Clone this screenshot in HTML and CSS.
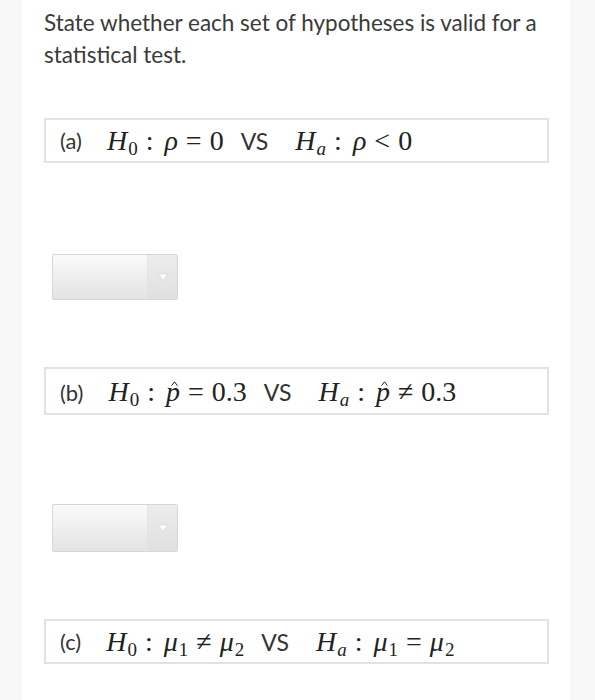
FILE: index.html
```html
<!DOCTYPE html>
<html>
<head>
<meta charset="utf-8">
<link rel="stylesheet" href="styles.css">
</head>
<body>
<div class="card">
  <p class="title">State whether each set of hypotheses is valid for a statistical test.</p>

  <div class="hyp">
    <span class="lbl">(a)</span>
    <span class="math"><i>H</i><sub>0</sub><span class="col">:</span><i>ρ</i><span class="op">=</span>0</span>
    <span class="vs">VS</span>
    <span class="math"><i>H</i><sub><i>a</i></sub><span class="col">:</span><i>ρ</i><span class="op">&lt;</span>0</span>
  </div>
  <div class="select"><span class="sel-main"></span><span class="sel-btn"><svg width="10" height="8" viewBox="0 0 10 8"><path d="M0.5 1 L9.5 1 L5 7.5 Z" fill="#fff" stroke="#d0d0d0" stroke-width="0.6"/></svg></span></div>

  <div class="hyp tall">
    <span class="lbl">(b)</span>
    <span class="math"><i>H</i><sub>0</sub><span class="col">:</span><span class="hat"><i>p</i><svg class="caret" width="7" height="5" viewBox="0 0 7 5"><path d="M0.6 4.6 L3.5 0.8 L6.4 4.6" fill="none" stroke="#222" stroke-width="1"/></svg></span><span class="op">=</span>0.3</span>
    <span class="vs">VS</span>
    <span class="math"><i>H</i><sub><i>a</i></sub><span class="col">:</span><span class="hat"><i>p</i><svg class="caret" width="7" height="5" viewBox="0 0 7 5"><path d="M0.6 4.6 L3.5 0.8 L6.4 4.6" fill="none" stroke="#222" stroke-width="1"/></svg></span><span class="op">≠</span>0.3</span>
  </div>
  <div class="select"><span class="sel-main"></span><span class="sel-btn"><svg width="10" height="8" viewBox="0 0 10 8"><path d="M0.5 1 L9.5 1 L5 7.5 Z" fill="#fff" stroke="#d0d0d0" stroke-width="0.6"/></svg></span></div>

  <div class="hyp">
    <span class="lbl">(c)</span>
    <span class="math"><i>H</i><sub>0</sub><span class="col">:</span><i>μ</i><sub>1</sub><span class="op">≠</span><i>μ</i><sub>2</sub></span>
    <span class="vs">VS</span>
    <span class="math"><i>H</i><sub><i>a</i></sub><span class="col">:</span><i>μ</i><sub>1</sub><span class="op">=</span><i>μ</i><sub>2</sub></span>
  </div>
</div>
</body>
</html>
```
FILE: styles.css
```css
html, body {
  margin: 0;
  padding: 0;
  background: #f8f8f8;
}
.card {
  margin-left: 22px;
  width: 548px;
  min-height: 700px;
  background: #fff;
  padding: 7px 21px 0 22px;
  box-sizing: border-box;
  font-family: Lato, "Open Sans", sans-serif;
  color: #333;
}
.title {
  margin: 0;
  font-size: 22.5px;
  line-height: 32px;
  color: #3a3a3a;
}
.hyp {
  height: 45px;
  border: 2px solid #e2e2e2;
  box-sizing: border-box;
  display: flex;
  align-items: center;
  padding-left: 14px;
  width: 505px;
}
.hyp.tall { height: 48px; padding-top: 2px; }
.title + .hyp { margin-top: 47px; }
.select + .hyp { margin-top: 67px; }
.lbl {
  font-size: 22px;
  color: #333;
  margin-right: 25px;
}
.vs {
  font-size: 23px;
  color: #333;
  margin: 0 27px 0 17px;
}
.math {
  display: inline-block;
  white-space: nowrap;
  font-family: "Liberation Serif", "DejaVu Serif", serif;
  font-size: 28px;
  line-height: 30px;
  color: #222;
}
.math i { font-style: italic; }
.math sub {
  font-size: 19px;
  vertical-align: -5px;
  line-height: 0;
  margin-left: 1px;
}
.col { margin: 0 11px 0 8px; }
.op { margin: 0 8px; }
.hat {
  position: relative;
  display: inline-block;
  line-height: 1;
}
.caret {
  position: absolute;
  left: 5px;
  top: 3px;
}
.select {
  margin: 91px 0 0 8px;
  width: 126px;
  height: 46px;
  box-sizing: border-box;
  border: 1px solid #d6d6d6;
  border-radius: 2px;
  display: flex;
  background: linear-gradient(#fafafa, #e3e3e3);
}
.tall + .select { margin-top: 89px; height: 48px; }
.sel-main { flex: 1; }
.sel-btn {
  width: 29px;
  border-left: 1px solid #e4e4e4;
  display: flex;
  align-items: center;
  justify-content: center;
  background: linear-gradient(#ececec, #e0e0e0);
}
```
